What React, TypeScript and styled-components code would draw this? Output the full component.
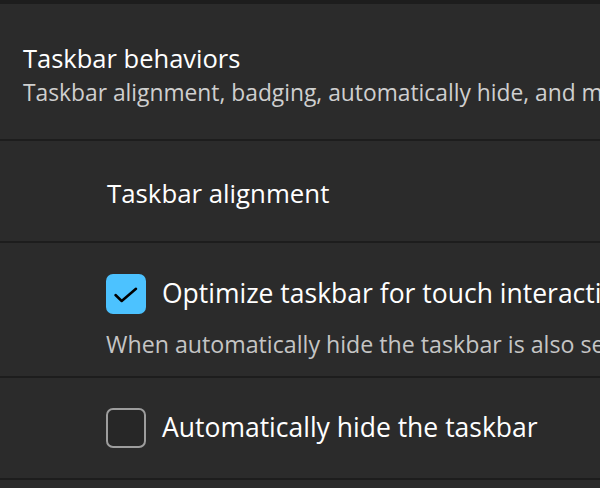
import styled, { createGlobalStyle } from 'styled-components';

const GlobalStyle = createGlobalStyle`
  html, body {
    margin: 0;
    padding: 0;
    background: #1f1f1f;
    overflow: hidden;
  }
  * {
    box-sizing: border-box;
  }
`;

const Page = styled.div`
  width: 600px;
  height: 488px;
  padding-top: 4px;
  display: flex;
  flex-direction: column;
  gap: 2px;
  background: #1d1d1d;
  font-family: 'Open Sans', 'Noto Sans', sans-serif;
  overflow: hidden;
`;

const Section = styled.div<{ $height: number; $indent: number; $top: number }>`
  height: ${(p) => p.$height}px;
  flex-shrink: 0;
  padding-left: ${(p) => p.$indent}px;
  padding-top: ${(p) => p.$top}px;
  background: #2b2b2b;
  display: flex;
  flex-direction: column;
  white-space: nowrap;
  overflow: hidden;
`;

const Filler = styled.div`
  flex: 1;
  background: #2b2b2b;
`;

const Title = styled.div<{ $size?: number }>`
  font-size: ${(p) => p.$size ?? 25.5}px;
  line-height: 34px;
  color: #ffffff;
`;

const Description = styled.div`
  margin-top: 2px;
  font-size: 22.8px;
  line-height: 32px;
  color: #cfcfcf;
`;

const CheckRow = styled.div`
  display: flex;
  align-items: center;
  gap: 16px;
  height: 40px;
`;

const Box = styled.div<{ $checked: boolean }>`
  width: 40px;
  height: 40px;
  flex-shrink: 0;
  border-radius: 7px;
  display: flex;
  align-items: center;
  justify-content: center;
  background: ${(p) => (p.$checked ? '#4cc2ff' : '#272727')};
  border: ${(p) => (p.$checked ? 'none' : '2px solid #9d9d9d')};
`;

const Label = styled.span`
  font-size: 26.5px;
  line-height: 34px;
  color: #ffffff;
  position: relative;
  top: -1px;
`;

const Hint = styled.div`
  margin-top: 16px;
  font-size: 23.2px;
  line-height: 28px;
  color: #c5c5c5;
`;

const Check = () => (
  <svg width="40" height="40" viewBox="0 0 40 40" fill="none">
    <path
      d="M9.5 21 L15.7 27 L30 14.7"
      stroke="#000000"
      strokeWidth="2.5"
      strokeLinecap="round"
      strokeLinejoin="round"
    />
  </svg>
);

const CheckOption = ({ checked, label }: { checked: boolean; label: string }) => (
  <CheckRow>
    <Box $checked={checked}>{checked ? <Check /> : null}</Box>
    <Label>{label}</Label>
  </CheckRow>
);

const App = () => {
  return (
    <>
      <GlobalStyle />
      <Page>
        <Section $height={135} $indent={23} $top={37}>
          <Title>Taskbar behaviors</Title>
          <Description>Taskbar alignment, badging, automatically hide, and multiple displays</Description>
        </Section>
        <Section $height={100} $indent={107} $top={35}>
          <Title $size={25.8}>Taskbar alignment</Title>
        </Section>
        <Section $height={133} $indent={106} $top={31}>
          <CheckOption checked label="Optimize taskbar for touch interactions when this device is used as a tablet" />
          <Hint>When automatically hide the taskbar is also selected, the taskbar will be smaller</Hint>
        </Section>
        <Section $height={100} $indent={106} $top={30}>
          <CheckOption checked={false} label="Automatically hide the taskbar" />
        </Section>
        <Filler />
      </Page>
    </>
  );
};

export default App;
